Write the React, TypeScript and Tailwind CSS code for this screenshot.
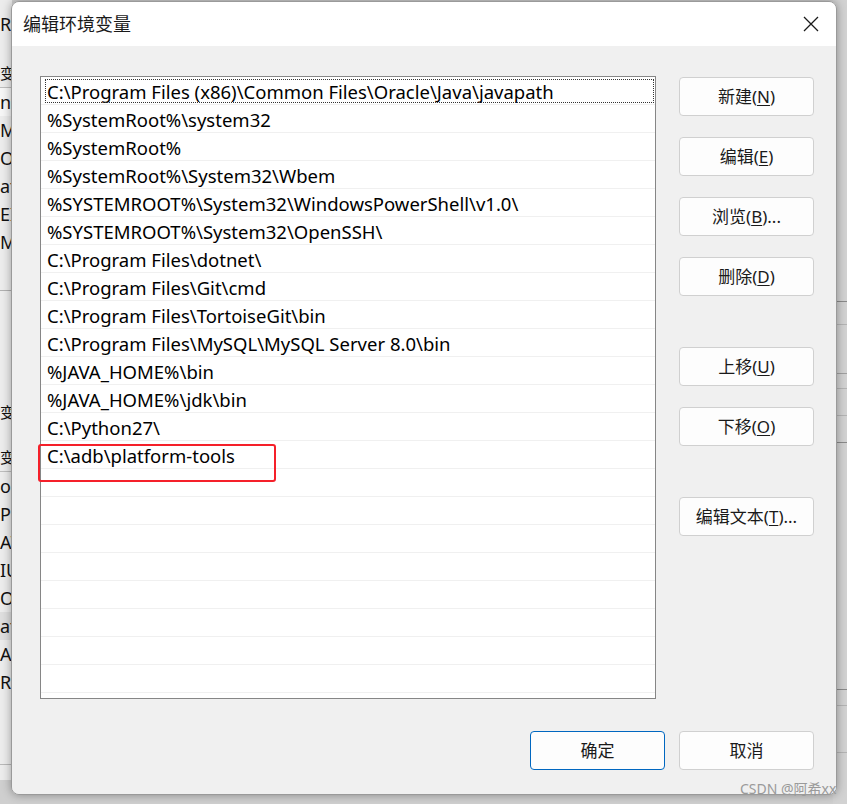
import React from 'react';

const paths = [
  'C:\\Program Files (x86)\\Common Files\\Oracle\\Java\\javapath',
  '%SystemRoot%\\system32',
  '%SystemRoot%',
  '%SystemRoot%\\System32\\Wbem',
  '%SYSTEMROOT%\\System32\\WindowsPowerShell\\v1.0\\',
  '%SYSTEMROOT%\\System32\\OpenSSH\\',
  'C:\\Program Files\\dotnet\\',
  'C:\\Program Files\\Git\\cmd',
  'C:\\Program Files\\TortoiseGit\\bin',
  'C:\\Program Files\\MySQL\\MySQL Server 8.0\\bin',
  '%JAVA_HOME%\\bin',
  '%JAVA_HOME%\\jdk\\bin',
  'C:\\Python27\\',
  'C:\\adb\\platform-tools',
];

const TOTAL_ROWS = 22;

// fragments of the window behind the dialog, cut off by the screen edge
const behindTop = ['nt', 'MC', 'On', 'at', 'EI', 'M'];
const behindBottom = ['o', 'Pri', 'AV', 'IU', 'OS', 'at', 'A', 'R'];

interface DlgButtonProps {
  label: string;
  hotkey?: string;
  suffix?: string;
  primary?: boolean;
}

const DlgButton: React.FC<DlgButtonProps> = ({ label, hotkey, suffix, primary }) => (
  <button
    className={`flex h-[39px] w-[135px] items-center justify-center rounded-[4px] bg-[#fdfdfd] text-[17px] text-[#1a1a1a] ${
      primary ? 'border border-[#0067c0]' : 'border border-[#d0d0d0]'
    }`}
  >
    <span>{label}</span>
    {hotkey && (
      <span>
        (<span className="underline underline-offset-2">{hotkey}</span>){suffix}
      </span>
    )}
  </button>
);

export default function App() {
  const rows = Array.from({ length: TOTAL_ROWS }, (_, i) => paths[i] ?? '');

  return (
    <div className="relative h-[804px] w-[847px] overflow-hidden bg-[#cfcfcf] font-['Noto_Sans','Noto_Sans_CJK_SC',sans-serif]">
      {/* window behind, only a sliver shows at the left edge */}
      <div className="absolute left-0 top-0 h-[780px] w-[12px] overflow-hidden bg-[#ececec] text-[18px] leading-[28px] text-[#111]">
        <div className="mt-[10px] whitespace-nowrap">R</div>
        <div className="mt-[21px] border-b border-[#bdbdbd] text-[15px] whitespace-nowrap">变</div>
        {behindTop.map((t, i) => (
          <div key={i} className={`whitespace-nowrap ${i === 0 ? 'bg-[#f6f6f6]' : ''}`}>
            {t}
          </div>
        ))}
        <div className="mt-[34px] border-t border-[#b0b0b0]" />
        <div className="mt-[107px] text-[15px]">变</div>
        <div className="mt-[17px] border-b border-[#bdbdbd] text-[15px]">变</div>
        {behindBottom.map((t, i) => (
          <div key={i} className={`whitespace-nowrap ${i === 5 ? 'bg-[#dedede]' : ''}`}>
            {t}
          </div>
        ))}
        <div className="mt-[68px] border-t border-[#b8b8b8]" />
      </div>

      {/* right-side remains */}
      <div className="absolute right-0 top-0 h-full w-[14px] bg-[#d2d2d2]">
        <div className="mt-[301px] border-t border-[#8a8a8a]" />
        <div className="mt-[22px] border-t border-[#b4b4b4]" />
        <div className="mt-[48px] border-t border-[#a0a0a0]" />
        <div className="mt-[14px] border-t border-[#b4b4b4]" />
        <div className="mt-[26px] border-t border-[#b4b4b4]" />
        <div className="mt-[26px] border-t border-[#8a8a8a]" />
        <div className="mt-[246px] border-t border-[#8a8a8a]" />
        <div className="mt-[15px] border-t border-[#b4b4b4]" />
        <div className="mt-[46px] border-t border-[#b4b4b4]" />
      </div>

      {/* dialog */}
      <div className="absolute left-[11px] top-[1px] flex h-[794px] w-[826px] flex-col overflow-hidden rounded-lg border border-[#9a9a9a] shadow-[0_0_10px_rgba(0,0,0,0.35)]">
        <div className="flex h-[44px] items-center justify-between bg-white pl-[11px] pr-[16px]">
          <span className="text-[18px] text-[#1a1a1a]">编辑环境变量</span>
          <svg width="18" height="18" viewBox="0 0 18 18" className="text-[#1a1a1a]">
            <path d="M2 2 L16 16 M16 2 L2 16" stroke="currentColor" strokeWidth="1.3" fill="none" />
          </svg>
        </div>

        <div className="flex flex-1 flex-col bg-[#f0f0f0] pl-[28px] pr-[22px] pt-[30px]">
          <div className="flex gap-[23px]">
            <div className="relative h-[623px] w-[616px] border border-[#868686] bg-white">
              <div className="h-full overflow-hidden">
                {rows.map((p, i) => (
                  <div
                    key={i}
                    className="relative h-[28px] whitespace-nowrap border-b border-[#f0f0f0] pl-[6px] text-[18.5px] leading-[29px] text-black"
                  >
                    {i === 0 && (
                      <div className="absolute bottom-[1px] left-[4px] right-[1px] top-[2px] border border-dotted border-[#333]" />
                    )}
                    {p}
                  </div>
                ))}
              </div>
              <div className="absolute left-[-3px] top-[367px] h-[38px] w-[238px] rounded-[3px] border-2 border-[#f5202a]" />
            </div>

            <div className="flex flex-col pt-[1px]">
              <div className="flex flex-col gap-[21px]">
                <DlgButton label="新建" hotkey="N" />
                <DlgButton label="编辑" hotkey="E" />
                <DlgButton label="浏览" hotkey="B" suffix="..." />
                <DlgButton label="删除" hotkey="D" />
              </div>
              <div className="mt-[51px] flex flex-col gap-[21px]">
                <DlgButton label="上移" hotkey="U" />
                <DlgButton label="下移" hotkey="O" />
              </div>
              <div className="mt-[51px]">
                <DlgButton label="编辑文本" hotkey="T" suffix="..." />
              </div>
            </div>
          </div>

          <div className="mt-[32px] flex justify-end gap-[14px]">
            <DlgButton label="确定" primary />
            <DlgButton label="取消" />
          </div>
        </div>
      </div>

      <div className="absolute left-[740px] top-[778px] text-[14px] text-[#9a9a9a]">CSDN @阿希xx</div>
    </div>
  );
}
